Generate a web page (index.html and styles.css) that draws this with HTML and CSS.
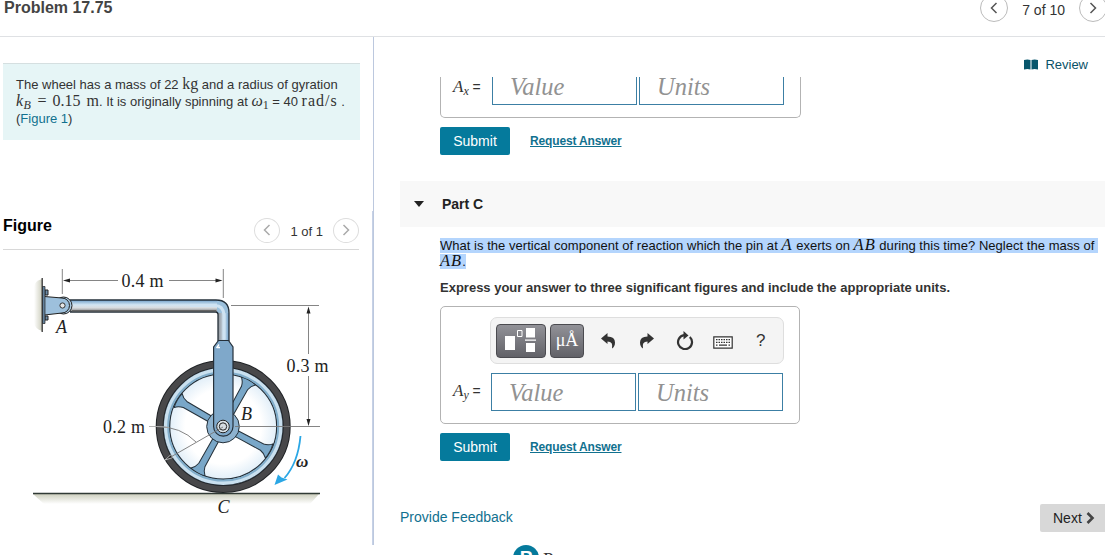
FILE: index.html
```html
<!DOCTYPE html>
<html lang="en">

<head>
    <title>Problem 17.75</title>
    <meta charset="UTF-8">
    <link rel="stylesheet" href="styles.css">
</head>

<body>
    <header class="topbar">
        <h1>Problem 17.75</h1>
        <div class="pager">
            <button class="circle"><svg width="10" height="14" viewBox="0 0 10 14"><path d="M7.5 2 2.5 7l5 5"/></svg></button>
            <span>7 of 10</span>
            <button class="circle"><svg width="10" height="14" viewBox="0 0 10 14"><path d="m2.500 2 5 5-5 5"/></svg></button>
        </div>
    </header>
    <main class="content">
        <aside class="left">
            <div class="statement">
                <p>The wheel has a mass of 22 <span class="tex">kg</span> and a radius of gyration</p>
                <p><span class="tex eq"><i>k<sub>B</sub></i> = 0.15 m</span>. It is originally spinning at <span class="tex"><i>ω</i><sub>1</sub></span> = 40 <span class="tex unit">rad/s</span> .</p>
                <p>(<a href="#figure">Figure 1</a>)</p>
            </div>
            <div class="figure-head" id="figure">
                <h2>Figure</h2>
                <div class="pager small">
                    <button class="circle"><svg width="10" height="14" viewBox="0 0 10 14"><path d="M7.500 2 2.500 7l5 5"/></svg></button>
                    <span>1 of 1</span>
                    <button class="circle"><svg width="10" height="14" viewBox="0 0 10 14"><path d="m2.500 2 5 5-5 5"/></svg></button>
                </div>
            </div>
            <svg class="figure" width="356" height="290" viewBox="4 250 356 290">
                <defs>
                    <linearGradient id="pipe" x1="0" y1="0" x2="0" y2="1">
                        <stop offset="0" stop-color="#6f9fc8"/>
                        <stop offset=".4" stop-color="#d3e6f3"/>
                        <stop offset=".65" stop-color="#d9dcdf"/>
                        <stop offset="1" stop-color="#777"/>
                    </linearGradient>
                    <linearGradient id="pipev" x1="1" y1="0" x2="0" y2="0">
                        <stop offset="0" stop-color="#6f9fc8"/>
                        <stop offset=".45" stop-color="#cfe2f1"/>
                        <stop offset="1" stop-color="#8a8d92"/>
                    </linearGradient>
                    <linearGradient id="ground" x1="0" y1="0" x2="0" y2="1">
                        <stop offset="0" stop-color="#cdcfbe"/>
                        <stop offset="1" stop-color="#fff"/>
                    </linearGradient>
                    <linearGradient id="wall" x1="1" y1="0" x2="0" y2="0">
                        <stop offset="0" stop-color="#cfd0c0"/>
                        <stop offset="1" stop-color="#fff"/>
                    </linearGradient>
                    <radialGradient id="inside" cx=".5" cy=".5" r=".5">
                        <stop offset=".6" stop-color="#fff"/>
                        <stop offset="1" stop-color="#cfe4f4"/>
                    </radialGradient>
                </defs>
                <!-- ground and wall -->
                <path d="M33 494h286l-9 10H44z" fill="url(#ground)"/>
                <path d="M42 279v52q-7-2-8-8v-37q1-5 8-7z" fill="url(#wall)"/>
                <path d="M42.200 278v54" stroke="#333" stroke-width="1.300"/>
                <!-- wheel -->
                <ellipse cx="223.200" cy="426.500" rx="63.500" ry="62.500" fill="url(#inside)" stroke="#1f2225" stroke-width="8"/>
                <ellipse cx="223.200" cy="426.500" rx="63.500" ry="62.500" fill="none" stroke="#48484a" stroke-width="6"/>
                <ellipse cx="223.200" cy="426.500" rx="56.400" ry="55.500" fill="none" stroke="#252f38" stroke-width="7"/>
                <g transform="translate(223.200 426.500)" fill="#79a7c8" stroke="#25313a">
                    <path id="spoke" d="M14-3.200 44-3.500q5-1 8-4.500 2 8 0 16-3-3.500-8-4.500L14 3.200z" transform="rotate(28)"/>
                    <use href="#spoke" transform="rotate(91)"/>
                    <use href="#spoke" transform="rotate(182)"/>
                    <use href="#spoke" transform="rotate(271)"/>
                </g>
                <ellipse cx="223.200" cy="426.500" rx="56.800" ry="55.900" fill="none" stroke="#c9e0ef" stroke-width="5"/>
                <ellipse cx="223.200" cy="426.500" rx="55" ry="54.100" fill="none" stroke="#82aecb" stroke-width="2"/>
                <circle cx="223" cy="426.500" r="16.300" fill="#8db2cf" stroke="#25313a"/>
                <!-- bent bar AB -->
                <path d="M70 300h147v12H70z" fill="url(#pipe)"/>
                <path d="M218 312h11v29h-11z" fill="url(#pipev)"/>
                <path d="M217 300q12 0 12 12v1h-11v-1h-1z" fill="#9bc0dc"/>
                <path d="M190 305.500h25q8 0 9 9v25" fill="none" stroke="#cfe3f2" stroke-width="3"/>
                <path d="M70 300h146q13 0 13 13v28M70 312h145.500q2.500 0 2.500 2.500V341" fill="none" stroke="#25303a" stroke-width="1.300"/>
                <path d="M72 310.800h144" stroke="#666" stroke-width="1.500"/>
                <path d="M218.500 340.500h10l4.500 6.500v79.500a9.700 9.700 0 0 1-19.400 0V347z" fill="#7fa8ca" stroke="#25303a" stroke-width="1.200"/>
                <path d="M216.500 348l2.500-3.500M217 347.500h3" stroke="#fff" stroke-width="1.300"/>
                <circle cx="223" cy="426.500" r="6.300" fill="#dbe3e9" stroke="#222"/>
                <circle cx="223" cy="426.500" r="3.700" fill="#d6dde3" stroke="#222"/>
                <!-- pin support A -->
                <circle cx="63.500" cy="305.500" r="8.500" fill="#a9c8df" stroke="#222"/>
                <path d="M44.500 296.500 62 298a7.500 7.500 0 0 1 0 15l-17.500 2z" fill="#9dc0dc" stroke="#222"/>
                <path d="M45 290h3v5h-3zM45 316h3v4h-3z" fill="#6c8ca8" stroke="#222"/>
                <path d="M42.500 286.500h2.500v37h-2.500z" fill="#63819b" stroke="#222" stroke-width=".7"/>
                <circle cx="62.500" cy="305.500" r="2.600" fill="#e6e6e6" stroke="#333"/>
                <!-- dimension lines -->
                <g fill="none" stroke="#777" stroke-width=".9">
                    <path d="M62.300 269v25M223.300 269v29M67 280.500h51M169 280.500h50M231 305.500h88M308.500 309v45M308.500 376v46M235 426.500h85"/>
                    <path d="M157 426.600q24 0 39 15.400M169 458 223 427"/>
                    <path d="M149 426.500h8q6 0 12 1" stroke="#aaa"/>
                </g>
                <path d="M33 493.500h287" stroke="#303a35" stroke-width="1.300"/>
                <g fill="#222">
                    <path d="m63 280.500 7-2v4zM222.500 280.500l-7-2v4zM308.500 306.500l2 7h-4zM308.500 426l2-7h-4z"/>
                    <path d="m165 460 5.500-5 2.500 2.500z" stroke="#ccc" stroke-width=".8"/>
                </g>
                <path d="M300.500 436q-2.500 27-16 42" fill="none" stroke="#2ba7e5" stroke-width="1.800"/>
                <path d="m274.500 485 3.500-10.500 3.500 3 6 2z" fill="#2ba7e5"/>
                <g class="labels">
                    <text x="121.500" y="286.500" textLength="42">0.4 m</text>
                    <text x="286.500" y="372" textLength="42">0.3 m</text>
                    <text x="103" y="433" textLength="42">0.2 m</text>
                    <text x="56" y="333" class="it">A</text>
                    <text x="241" y="420" class="it">B</text>
                    <text x="217.500" y="513" class="it">C</text>
                    <text x="296" y="467" class="it bold">ω</text>
                </g>
            </svg>
        </aside>
        <section class="right">
            <a class="review" href="#"><svg width="14" height="11" viewBox="0 0 14 11"><path d="M0 1q3.500-1 6.500 0v9.500q-3-1-6.500 0zM7.500 1q3-1 6.500 0v9.500q-3.500-1-6.500 0z"/></svg>Review</a>
            <div class="part part-b">
                <div class="answer cut">
                    <div class="fields">
                        <label><i>A<sub>x</sub></i> =</label>
                        <div class="field">Value</div>
                        <div class="field">Units</div>
                    </div>
                </div>
                <div class="actions">
                    <button class="submit">Submit</button>
                    <a href="#">Request Answer</a>
                </div>
            </div>
            <div class="part-title"><span class="caret"></span>Part C</div>
            <div class="part">
                <p class="question"><mark>What is the vertical component of reaction which the pin at <i>A</i> exerts on <i>AB</i> during this time? Neglect the mass of&nbsp;</mark><br><mark><i>AB</i>.</mark></p>
                <p class="express">Express your answer to three significant figures and include the appropriate units.</p>
                <div class="answer">
                    <div class="toolbar">
                        <button class="tool wide"><svg width="34" height="28" viewBox="0 0 34 28"><g fill="#fff"><path d="M1 11h10v14H1zM22 3h9v9.500h-9zM21 14.500h11v1.300H21zM22 18h9v9h-9z"/></g><path d="M13.500 5.500h4.500v6h-4.500z" fill="none" stroke="#fff"/></svg></button>
                        <button class="tool">μÅ</button>
                        <svg class="undo" width="16" height="18" viewBox="0 0 16 18"><path d="M0 6.500 6.500 1v3.500q7.500 0 7.500 6 0 4-3 6 1.500-7-4.500-7V12z"/></svg>
                        <svg class="redo" width="16" height="18" viewBox="0 0 16 18"><path d="M15 6.500 8.500 1v3.500q-7.500 0-7.500 6 0 4 3 6-1.500-7 4.500-7V12z"/></svg>
                        <svg class="reset" width="18" height="19" viewBox="0 0 18 19"><path d="M8 4.200A7 7 0 1 0 13.800 6" fill="none" stroke="#333" stroke-width="2.200"/><path d="m7.500 0 5 4.500-5 4z"/></svg>
                        <svg class="keyboard" width="20" height="13" viewBox="0 0 20 13"><path d="M.8.8h18.400v11.400H.8z" fill="#fff" stroke="#333" stroke-width="1.200"/><path d="M3 3.700h14M3 6.300h14" stroke="#333" stroke-width="1.300" stroke-dasharray="1.500 1"/><path d="M3 9.200h1.500M6 9.200h8M15.500 9.200H17" stroke="#333" stroke-width="1.300"/></svg>
                        <span class="help">?</span>
                    </div>
                    <div class="fields">
                        <label><i>A<sub>y</sub></i> =</label>
                        <div class="field">Value</div>
                        <div class="field">Units</div>
                    </div>
                </div>
                <div class="actions">
                    <button class="submit">Submit</button>
                    <a href="#">Request Answer</a>
                </div>
            </div>
            <div class="bottom">
                <a href="#">Provide Feedback</a>
                <button class="next">Next <svg width="9" height="12" viewBox="0 0 9 12"><path d="m1.500 1 5 5-5 5" fill="none" stroke="#444" stroke-width="2.600"/></svg></button>
            </div>
            <footer class="brand"><span class="logo">P</span><span>Pearson</span></footer>
        </section>
    </main>
</body>

</html>
```
FILE: styles.css
```css
* {
    margin: 0;
    padding: 0;
    box-sizing: border-box;
}

body {
    width: 1105px;
    height: 555px;
    overflow: hidden;
    background: #fff;
    color: #333;
    font-family: "Liberation Sans", Arial, sans-serif;
    font-size: 13px;
}

a {
    color: #11718f;
    text-decoration: none;
}

button {
    border: 0;
    font-family: inherit;
}

.topbar {
    display: flex;
    justify-content: space-between;
    height: 37px;
    padding-left: 4px;
    border-bottom: 1px solid #dfe1e4;
}

h1 {
    font-size: 16px;
    line-height: 16px;
    color: #444;
}

.pager {
    display: flex;
    align-items: center;
    font-size: 14px;
}

.topbar .pager {
    height: 28px;
    margin: -6px -2px 0 0;
    gap: 14px;
}

.topbar .pager span {
    padding-top: 4px;
}

.circle {
    display: flex;
    align-items: center;
    justify-content: center;
    width: 28px;
    height: 28px;
    border: 1px solid #bbb;
    border-radius: 50%;
    background: #fff;
}

.circle path {
    fill: none;
    stroke: #555;
    stroke-width: 1.5;
}

.content {
    display: flex;
    height: 518px;
}

/* the divider gets thicker beside the figure */
.left {
    width: 374px;
    height: 508px;
    padding: 26px 0 0 3px;
    border-right: 1px solid #bcc8de;
    background: linear-gradient(#c6d1e6, #c6d1e6) no-repeat right bottom / 1px 334px;
}

.statement {
    width: 357px;
    height: 77px;
    padding: 12px 0 0 13px;
    border-top: 1px solid #d5dfe0;
    background: #e6f5f6;
    line-height: 17px;
    white-space: nowrap;
}

.statement p {
    height: 17px;
}

.tex {
    font-family: "Liberation Serif", serif;
    font-size: 16px;
    line-height: 1;
}

.eq {
    word-spacing: 2px;
}

.eq i {
    letter-spacing: 0.5px;
}

.unit {
    letter-spacing: 1px;
}

sub {
    font-size: 12px;
    line-height: 0;
    vertical-align: -3px;
}

.figure-head {
    display: flex;
    justify-content: space-between;
    width: 356px;
    height: 44px;
    margin-top: 66px;
    border-bottom: 1px solid #d8d8d8;
}

h2 {
    padding-top: 10px;
    font-size: 16px;
    line-height: 20px;
    color: #000;
}

.small {
    gap: 10px;
    height: 26px;
    margin-top: 11px;
    font-size: 13px;
}

.small span {
    padding-top: 3px;
}

.small .circle {
    width: 26px;
    height: 25px;
    border-color: #ddd;
}

.small path {
    stroke: #aaa;
}

.figure {
    display: block;
    margin-left: 1px;
}

.labels {
    font-family: "Liberation Serif", serif;
    font-size: 18px;
    fill: #222;
}

.it {
    font-style: italic;
}

.bold {
    font-size: 17px;
    font-weight: bold;
}

.right {
    display: flex;
    flex-direction: column;
    width: 731px;
    padding-left: 26px;
}

.review {
    display: flex;
    align-items: center;
    align-self: flex-end;
    gap: 7px;
    height: 16px;
    margin: 19px 17px 5px 0;
    font-size: 13px;
    color: #0b5268;
}

.review svg {
    fill: #07566c;
}

.part {
    padding-left: 40px;
}

.part-b {
    height: 104px;
}

.answer {
    width: 360px;
    height: 118px;
    padding: 10px 16px 0 12px;
    border: 1px solid #b3b3b3;
    border-radius: 5px;
}

.cut {
    width: 361px;
    height: 41px;
    padding: 0 16px 0 12px;
    border-top: 0;
    border-radius: 0 0 5px 5px;
    overflow: hidden;
}

.fields {
    display: flex;
    gap: 2px;
    height: 38px;
}

.cut .fields {
    margin-top: -10px;
}

.fields label {
    width: 36px;
    padding-top: 8px;
    font-size: 14px;
    white-space: nowrap;
}

.cut label {
    width: 37px;
    padding-top: 10px;
}

.fields label i {
    font-family: "Liberation Serif", serif;
    font-size: 17px;
}

.field {
    width: 145px;
    height: 38px;
    padding-left: 17px;
    border: 1px solid #3c7fa4;
    font: italic 24.5px/37px "Liberation Serif", serif;
    color: #929292;
}

.cut .field {
    line-height: 38px;
}

.actions {
    display: flex;
    align-items: center;
    gap: 20px;
    height: 28px;
    margin-top: 9px;
}

.actions a {
    font-size: 12px;
    letter-spacing: -0.15px;
    font-weight: bold;
    text-decoration: underline;
}

.submit {
    width: 70px;
    height: 28px;
    border-radius: 2px;
    background: #057a9c;
    color: #fff;
    font-size: 14px;
}

.part-title {
    display: flex;
    align-items: center;
    height: 46px;
    padding-left: 14px;
    background: #f8f8f8;
    color: #222;
    font-size: 14px;
    font-weight: bold;
}

.caret {
    margin-right: 18px;
    border: 5.5px solid transparent;
    border-top: 6px solid #222;
    border-bottom: 0;
}

.question {
    height: 32px;
    margin-top: 11px;
    line-height: 16px;
    letter-spacing: 0.03px;
    color: #111;
    white-space: nowrap;
}

mark {
    background: #b4d5fd;
    color: #111;
}

.question i {
    font-family: "Liberation Serif", serif;
    font-size: 16.5px;
    line-height: 14px;
    letter-spacing: 1px;
}

.express {
    height: 36px;
    padding-top: 10px;
    font-weight: bold;
    line-height: 15px;
}

.toolbar {
    display: flex;
    align-items: center;
    width: 294px;
    height: 47px;
    margin: 0 0 9px 37px;
    padding-left: 5px;
    border: 1px solid #dedede;
    border-radius: 7px;
    background: #f4f4f4;
}

.toolbar > svg {
    fill: #333;
}

.tool {
    width: 34px;
    height: 34px;
    border: 1px solid #4b4b50;
    border-radius: 4px;
    background: linear-gradient(#929298, #626268);
    color: #fff;
    font: 18px "Liberation Serif", serif;
}

.wide {
    width: 50px;
    margin-right: 4px;
}

.undo {
    margin-left: 17px;
}

.redo {
    margin-left: 22px;
}

.reset {
    margin-left: 21px;
}

.keyboard {
    margin: 4px 0 0 19px;
}

.help {
    margin-left: 23px;
    font-size: 17px;
}

.bottom {
    display: flex;
    align-items: center;
    justify-content: space-between;
    height: 28px;
    margin-top: 43px;
    font-size: 14px;
}

.bottom > a {
    margin-top: -2px;
}

.next {
    display: flex;
    align-items: center;
    gap: 4px;
    width: 65px;
    height: 28px;
    padding-left: 13px;
    border-radius: 2px 0 0 2px;
    background: #d8d8d8;
    color: #222;
    font-size: 14px;
}

.brand {
    display: flex;
    gap: 4px;
    height: 10px;
    margin: 13px 0 0 113px;
    font: 19px/30px "Liberation Serif", serif;
    overflow: hidden;
}

.logo {
    width: 26px;
    height: 26px;
    border-radius: 50%;
    background: #057a9c;
    color: #fff;
    font: bold 19px/26px "Liberation Sans", Arial, sans-serif;
    text-align: center;
}
```
